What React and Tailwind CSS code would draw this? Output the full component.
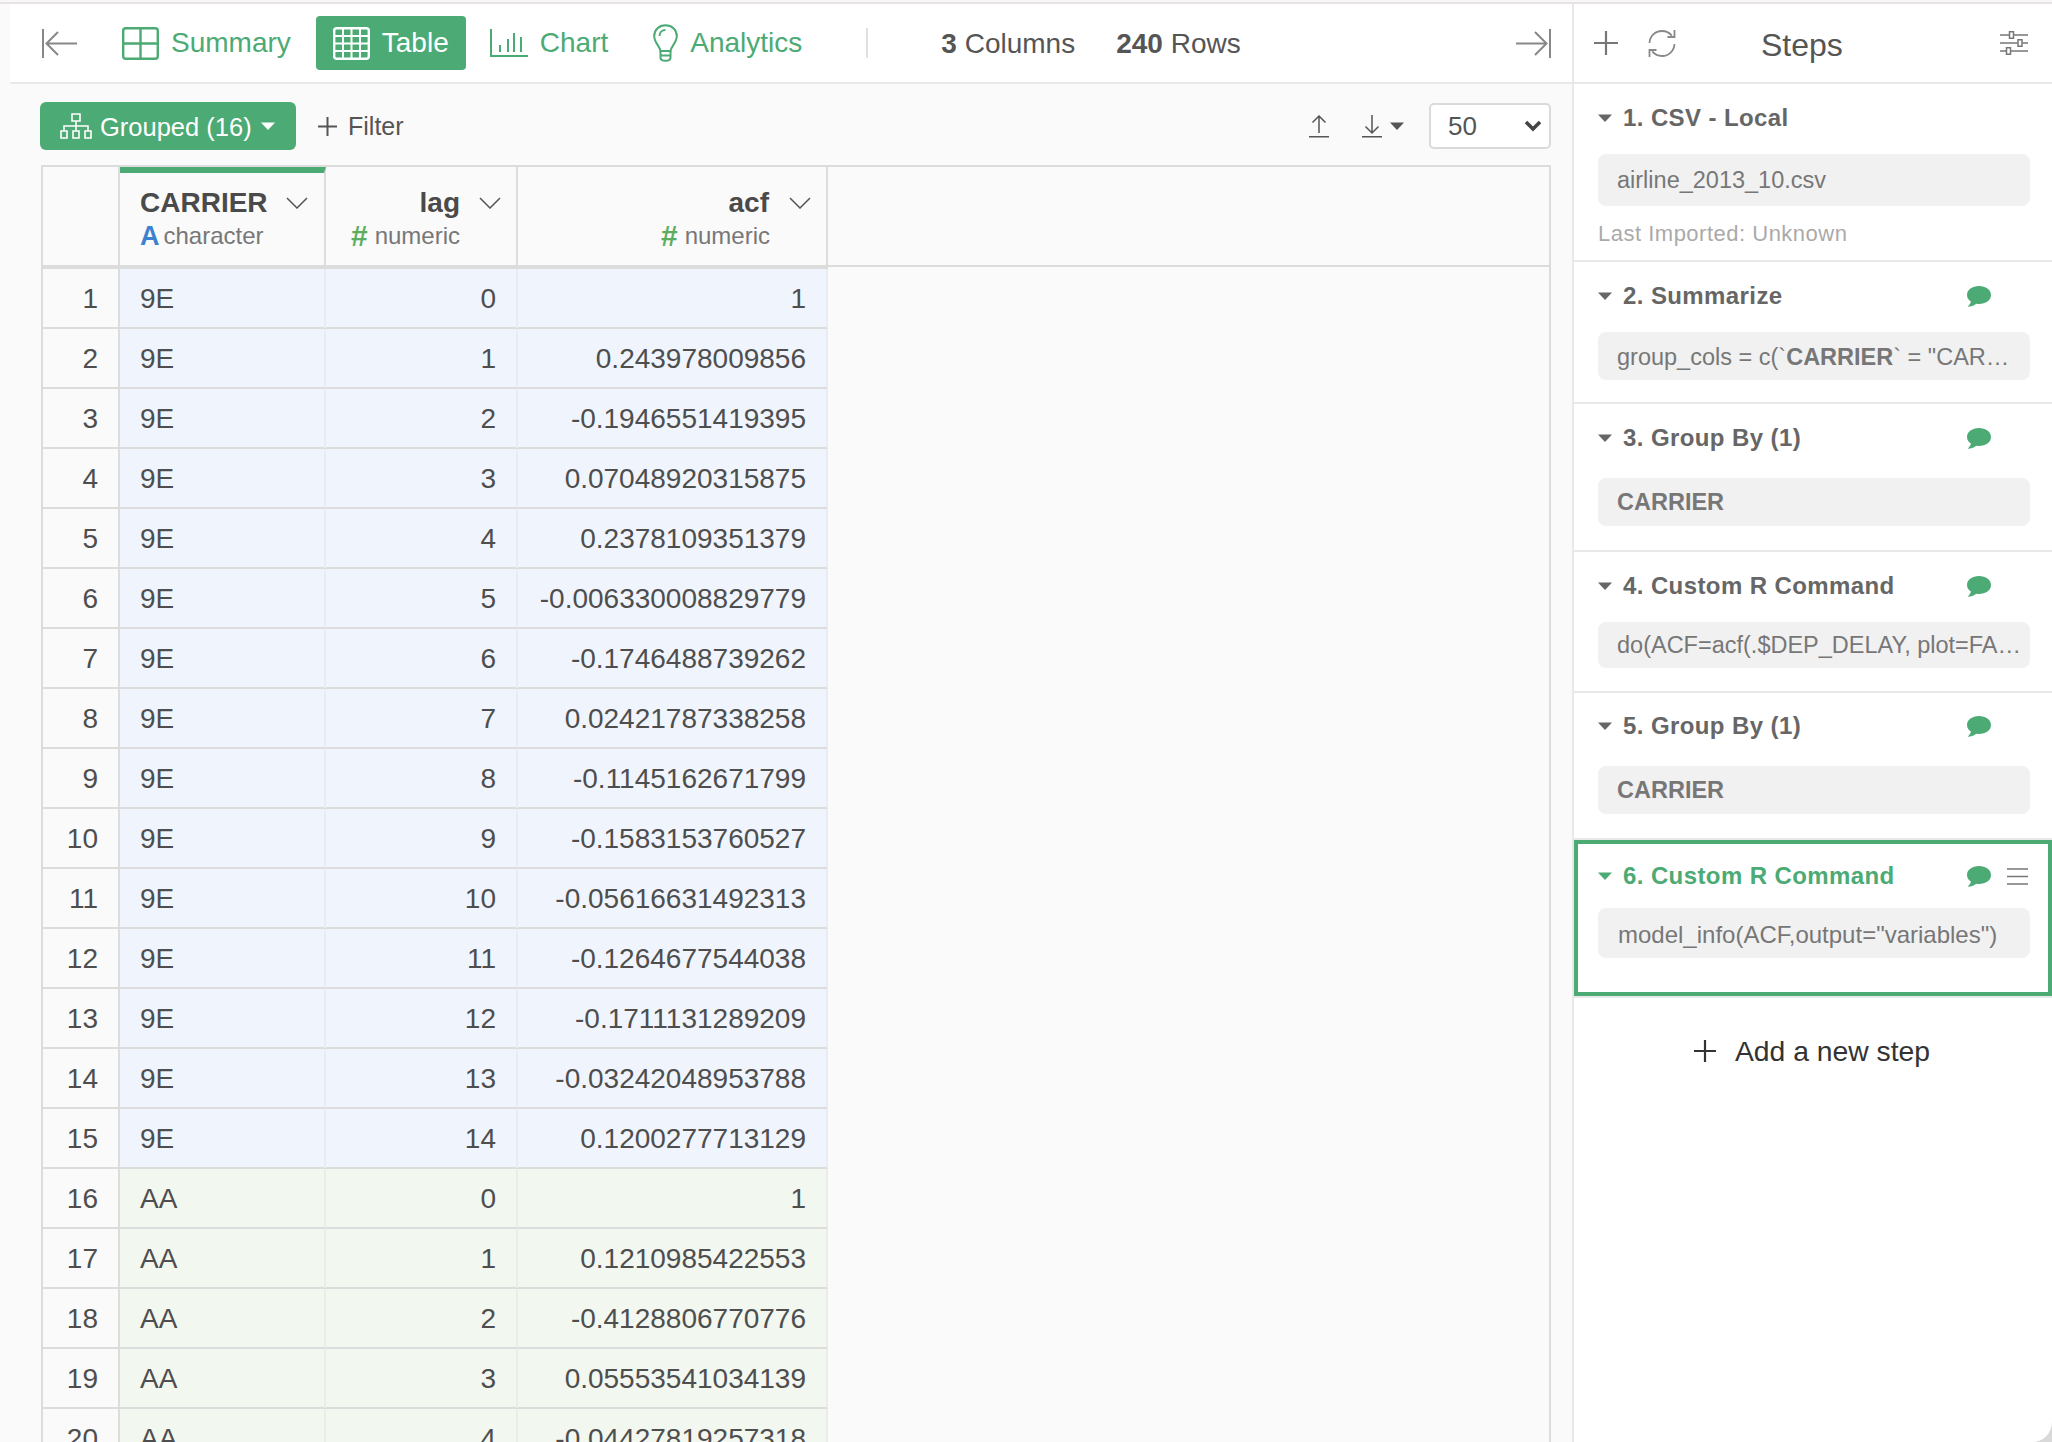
const GREEN = '#4caa74'

const ACF = [
  '1', '0.243978009856', '-0.1946551419395', '0.07048920315875', '0.2378109351379',
  '-0.006330008829779', '-0.1746488739262', '0.02421787338258', '-0.1145162671799', '-0.1583153760527',
  '-0.05616631492313', '-0.1264677544038', '-0.1711131289209', '-0.03242048953788', '0.1200277713129',
  '1', '0.1210985422553', '-0.4128806770776', '0.05553541034139', '-0.04427819257318',
]

const linhas = ACF.map((acf, i) => ({
  n: i + 1,
  carrier: i < 15 ? '9E' : 'AA',
  lag: i < 15 ? i : i - 15,
  acf,
}))

function Caret({ className, color = '#666' }) {
  return (
    <svg width="14" height="8" viewBox="0 0 14 8" className={className}>
      <path d="M0 0.5h14L7 8z" fill={color} />
    </svg>
  )
}

function Chevron() {
  return (
    <svg width="22" height="12" viewBox="0 0 22 12" className="shrink-0">
      <path d="M1 1l10 10L21 1" fill="none" stroke="#555" strokeWidth="1.5" />
    </svg>
  )
}

function Balao() {
  return (
    <svg width="24" height="21" viewBox="0 0 24 21">
      <path d="M12 0C5.4 0 0 3.7 0 9c0 2.8 1.5 5 3.9 6.6-.4 2-1.6 3.9-3.3 5.2 3.3 0 6.5-1.2 8.6-3 .9.2 1.8.2 2.8.2 6.6 0 12-3.7 12-9S18.6 0 12 0z" fill={GREEN} />
    </svg>
  )
}

function Tabs() {
  return (
    <>
      <div className="ml-[32px] shrink-0">
        <svg width="35" height="29" viewBox="0 0 35 29">
          <path d="M1 0v29M16 3L4.5 14.5 16 26M5 14.5h30" fill="none" stroke="#888" strokeWidth="2" />
        </svg>
      </div>

      <div className="ml-[45px] flex items-center gap-[12px] text-[28px] text-[#4caa74]">
        <svg width="37" height="33" viewBox="0 0 37 33">
          <rect x="1.2" y="1.2" width="34.6" height="30.6" rx="2.5" fill="none" stroke={GREEN} strokeWidth="2.4" />
          <path d="M18.5 1v31M1 16.500h35" stroke={GREEN} strokeWidth="2.4" />
        </svg>
        Summary
      </div>

      <div className="ml-[25px] flex h-[54px] w-[150px] items-center gap-[12px] rounded-[4px] bg-[#4caa74] pl-[17px] text-[28px] text-white">
        <svg width="37" height="33" viewBox="0 0 37 33">
          <rect x="1.200" y="1.200" width="34.600" height="30.600" rx="2.500" fill="none" stroke="#fff" strokeWidth="2.400" />
          <path d="M10 1v31M18.500 1v31M27 1v31M1 9h35M1 16.500h35M1 24h35" stroke="#fff" strokeWidth="2" />
        </svg>
        Table
      </div>

      <div className="ml-[24px] flex items-center gap-[12px] text-[28px] text-[#4caa74]">
        <svg width="38" height="28" viewBox="0 0 38 28">
          <path d="M1 0v27h37M10 16v7M18 10v13M24 4v19M31 8v15" fill="none" stroke={GREEN} strokeWidth="2" />
        </svg>
        Chart
      </div>

      <div className="ml-[45px] flex items-center gap-[12px] text-[28px] text-[#4caa74]">
        <svg width="25" height="38" viewBox="0 0 25 38">
          <path d="M7.500 27c0-4-6.300-8-6.300-15C1.200 5.700 6.300 1.200 12.500 1.200S23.800 5.700 23.800 12c0 7-6.300 11-6.300 15z" fill="none" stroke={GREEN} strokeWidth="2" />
          <path d="M7.500 27v6.500c0 2 2 3.300 5 3.300s5-1.300 5-3.300V27M7.500 31.500h10M12.500 6c-3.500 0-6 2.500-6 6" fill="none" stroke={GREEN} strokeWidth="2" />
        </svg>
        Analytics
      </div>

      <div className="ml-[64px] h-[30px] w-[2px] bg-[#e0e0e0]" />

      <div className="ml-[73px] pt-[2px] text-[28px] text-[#555]">
        <b className="font-bold">3</b> Columns
      </div>
      <div className="ml-[41px] pt-[2px] text-[28px] text-[#555]">
        <b className="font-bold">240</b> Rows
      </div>

      <div className="ml-auto mr-[21px] shrink-0">
        <svg width="35" height="29" viewBox="0 0 35 29">
          <path d="M34 0v29M19 3l11.500 11.500L19 26M0 14.500h30" fill="none" stroke="#888" strokeWidth="2" />
        </svg>
      </div>
    </>
  )
}

function Toolbar() {
  return (
    <div className="flex h-[83px] items-center pl-[40px] pr-[21px] pt-[3px]">
      <div className="flex h-[48px] w-[256px] items-center rounded-[6px] bg-[#4caa74] pl-[20px] text-[25.500px] text-white">
        <svg width="32" height="26" viewBox="0 0 32 26" className="shrink-0">
          <path
            d="M12 1h8v7h-8zM1 18h6v7H1zM13 18h6v7h-6zM25 18h6v7h-6zM16 8v10M4 18v-5h24v5"
            fill="none"
            stroke="#fff"
            strokeWidth="1.600"
          />
        </svg>
        <span className="ml-[8px] pt-[1px]">Grouped (16)</span>
        <Caret className="ml-[9px]" color="#fff" />
      </div>

      <div className="ml-[22px] flex items-center text-[25px] text-[#555]">
        <svg width="19" height="19" viewBox="0 0 19 19">
          <path d="M9.500 0v19M0 9.500h19" stroke="#555" strokeWidth="2" />
        </svg>
        <span className="ml-[11px] pt-[1px]">Filter</span>
      </div>

      <div className="ml-auto flex items-center">
        <svg width="20" height="23" viewBox="0 0 20 23">
          <path d="M10 1v17M3.500 7.500L10 1l6.500 6.500M0 21.800h20" fill="none" stroke="#555" strokeWidth="1.500" />
        </svg>
        <svg width="20" height="23" viewBox="0 0 20 23" className="ml-[33px]">
          <path d="M10 0v18M3.500 11.500L10 18l6.500-6.500M0 21.800h20" fill="none" stroke="#555" strokeWidth="1.500" />
        </svg>
        <Caret className="ml-[8px]" color="#555" />

        <div className="ml-[25px] flex h-[46px] w-[122px] items-center justify-between rounded-[5px] border-2 border-[#dadada] bg-white pl-[17px] pr-[7px] text-[26px] text-[#555]">
          50
          <svg width="18" height="12" viewBox="0 0 18 12">
            <path d="M2 2l7 7 7-7" fill="none" stroke="#444" strokeWidth="3.500" />
          </svg>
        </div>
      </div>
    </div>
  )
}

function CabecalhoTabela() {
  return (
    <div className="flex h-[102px] text-[#4a4a4a]">
      <div className="w-[77px] shrink-0 border-b-4 border-r-2 border-[#dcdcdc]" />

      <div className="w-[206px] shrink-0 border-b-4 border-r-2 border-t-[6px] border-[#dcdcdc] border-t-[#4caa74] pl-[20px] pr-[16px] pt-[14px]">
        <div className="flex h-[32px] items-center justify-between text-[28px] font-bold leading-[32px]">
          CARRIER
          <Chevron />
        </div>
        <div className="mt-[2px] flex h-[30px] items-center text-[24px] text-[#777]">
          <span className="mr-[4px] text-[27px] font-bold text-[#3b82d0]">A</span>
          character
        </div>
      </div>

      <div className="w-[192px] shrink-0 border-b-4 border-r-2 border-[#dcdcdc] pr-[15px] pt-[20px]">
        <div className="flex h-[32px] items-center justify-end gap-[19px] text-[28px] font-bold leading-[32px]">
          lag
          <Chevron />
        </div>
        <div className="mt-[2px] flex h-[30px] items-center justify-end pr-[41px] text-[24px] text-[#777]">
          <span className="mr-[7px] text-[30px] font-bold leading-[30px] text-[#5cae5e]">#</span>
          numeric
        </div>
      </div>

      <div className="w-[310px] shrink-0 border-b-4 border-r-2 border-[#dcdcdc] pr-[15px] pt-[20px]">
        <div className="flex h-[32px] items-center justify-end gap-[20px] text-[28px] font-bold leading-[32px]">
          acf
          <Chevron />
        </div>
        <div className="mt-[2px] flex h-[30px] items-center justify-end pr-[41px] text-[24px] text-[#777]">
          <span className="mr-[7px] text-[30px] font-bold leading-[30px] text-[#5cae5e]">#</span>
          numeric
        </div>
      </div>

      <div className="h-[100px] grow border-b-2 border-[#dcdcdc]" />
    </div>
  )
}

function Tabela() {
  return (
    <div className="ml-[41px] mr-[21px] grow overflow-hidden border-x-2 border-t-2 border-[#dcdcdc] bg-[#fafafa]">
      <CabecalhoTabela />
      {linhas.map((l) => {
        const fundo = l.n <= 15 ? 'bg-[#f0f5fd] border-r-[#e8edf5]' : 'bg-[#f2f7f0] border-r-[#e9eee8]'
        return (
          <div key={l.n} className="flex h-[60px] text-[28px] text-[#4e4e4e]">
            <div className="flex w-[77px] shrink-0 items-center justify-end border-b-2 border-r-2 border-[#dcdcdc] pr-[20px] pt-[1px]">
              {l.n}
            </div>
            <div className={`flex w-[206px] shrink-0 items-center border-b-2 border-r-2 border-b-[#dcdcdc] pl-[20px] pt-[1px] ${fundo}`}>
              {l.carrier}
            </div>
            <div className={`flex w-[192px] shrink-0 items-center justify-end border-b-2 border-r-2 border-b-[#dcdcdc] pr-[20px] pt-[1px] ${fundo}`}>
              {l.lag}
            </div>
            <div className={`flex w-[310px] shrink-0 items-center justify-end border-b-2 border-r-2 border-b-[#dcdcdc] pr-[20px] pt-[1px] ${fundo}`}>
              {l.acf}
            </div>
          </div>
        )
      })}
    </div>
  )
}

function Passo({ titulo, texto, altura, caixa, topoTitulo, comentario = true, bold = false, rodape }) {
  return (
    <div className={`flex flex-col border-b-2 border-[#e8e8e8] pl-[24px] pr-[22px] ${altura}`}>
      <div className={`flex h-[32px] shrink-0 items-center ${topoTitulo}`}>
        <Caret />
        <span className="ml-[11px] text-[24px] font-bold tracking-[0.400px] text-[#666]">{titulo}</span>
        {comentario && (
          <span className="ml-auto mr-[39px] flex">
            <Balao />
          </span>
        )}
      </div>
      <div className={`flex shrink-0 items-center whitespace-nowrap rounded-[8px] bg-[#f1f1f1] pl-[19px] pt-[1px] text-[23.500px] text-[#777] ${caixa} ${bold ? 'font-bold' : ''}`}>
        {texto}
      </div>
      {rodape}
    </div>
  )
}

function Sidebar() {
  return (
    <div className="grow bg-[#d9d9d9]">
      <div className="h-full overflow-hidden rounded-br-[20px] bg-white">
        <div className="flex h-[80px] items-center border-b-2 border-[#e8e8e8] bg-white pl-[20px] pr-[24px]">
          <svg width="24" height="24" viewBox="0 0 24 24">
            <path d="M12 0v24M0 12h24" stroke="#777" strokeWidth="2.200" />
          </svg>
          <svg width="28" height="27" viewBox="0 0 28 27" className="ml-[30px]">
            <path
              d="M1.500 13C1.800 6.200 7.200 1 14 1c4 0 7.500 1.800 9.800 4.600M26.500 14c-.3 6.800-5.700 12-12.500 12-4 0-7.500-1.800-9.800-4.600M26.500 0v7h-7M1.500 27v-7h7"
              fill="none"
              stroke="#888"
              strokeWidth="1.800"
            />
          </svg>
          <span className="ml-[85px] pt-[3px] text-[32px] text-[#555]">Steps</span>
          <svg width="28" height="24" viewBox="0 0 28 24" className="ml-auto">
            <path
              d="M0 4h28M0 12h28M0 20h28"
              stroke="#777"
              strokeWidth="1.500"
            />
            <path d="M9.500 .8h4v6.400h-4zM18 8.800h4v6.400h-4zM6.500 16.800h4v6.400h-4z" fill="#fff" stroke="#777" strokeWidth="1.500" />
          </svg>
        </div>

        <Passo
          titulo="1. CSV - Local"
          texto="airline_2013_10.csv"
          altura="h-[178px]"
          topoTitulo="mt-[18px]"
          caixa="mt-[20px] h-[52px]"
          comentario={false}
          rodape={<div className="mt-[14px] text-[22px] leading-[28px] tracking-[0.500px] text-[#aaa]">Last Imported: Unknown</div>}
        />
        <Passo
          titulo="2. Summarize"
          altura="h-[142px]"
          topoTitulo="mt-[18px]"
          caixa="mt-[20px] h-[48px]"
          texto={
            <span className="pt-[2px]">
              group_cols = c(`<b className="font-bold">CARRIER</b>` = "CAR…
            </span>
          }
        />
        <Passo titulo="3. Group By (1)" texto="CARRIER" bold altura="h-[148px]" topoTitulo="mt-[18px]" caixa="mt-[24px] h-[48px]" />
        <Passo
          titulo="4. Custom R Command"
          texto="do(ACF=acf(.$DEP_DELAY, plot=FA…"
          altura="h-[141px]"
          topoTitulo="mt-[18px]"
          caixa="mt-[20px] h-[46px]"
        />
        <Passo titulo="5. Group By (1)" texto="CARRIER" bold altura="h-[147px]" topoTitulo="mt-[17px]" caixa="mt-[24px] h-[48px]" />

        <div className="h-[156px] border-4 border-[#4caa74] pl-[20px] pr-[18px]">
          <div className="mt-[16px] flex h-[32px] items-center">
            <Caret color={GREEN} />
            <span className="ml-[11px] text-[24px] font-bold tracking-[0.400px] text-[#4caa74]">6. Custom R Command</span>
            <span className="ml-auto flex">
              <Balao />
            </span>
            <svg width="21" height="17" viewBox="0 0 21 17" className="ml-[16px] mr-[2px]">
              <path d="M0 1h21M0 8.500h21M0 16h21" stroke="#777" strokeWidth="1.500" />
            </svg>
          </div>
          <div className="mt-[16px] flex h-[50px] items-center whitespace-nowrap rounded-[8px] bg-[#f1f1f1] pl-[20px] pt-[3px] text-[24px] text-[#777]">
            model_info(ACF,output="variables")
          </div>
        </div>
        <div className="h-[2px] bg-[#e8e8e8]" />

        <div className="mt-[32px] flex items-center pl-[120px] text-[28.300px] text-[#333]">
          <svg width="22" height="22" viewBox="0 0 22 22">
            <path d="M11 0v22M0 11h22" stroke="#333" strokeWidth="2.200" />
          </svg>
          <span className="ml-[19px]">Add a new step</span>
        </div>
      </div>
    </div>
  )
}

export default function App() {
  return (
    <div className="flex h-[1442px] w-[2052px] flex-col overflow-hidden bg-[#fafafa] font-['Liberation_Sans',Arial,sans-serif]">
      <div className="h-[2px] shrink-0 bg-[#f7f7f7]" />
      <div className="h-[2px] shrink-0 bg-[#e8e4e4]" />
      <div className="flex min-h-0 grow">
        <div className="flex w-[1572px] shrink-0 flex-col">
          <div className="ml-[10px] flex h-[80px] shrink-0 items-center border-b-2 border-[#e8e8e8] bg-white">
            <Tabs />
          </div>
          <Toolbar />
          <Tabela />
        </div>
        <div className="w-[2px] shrink-0 bg-[#e8e8e8]" />
        <Sidebar />
      </div>
    </div>
  )
}
